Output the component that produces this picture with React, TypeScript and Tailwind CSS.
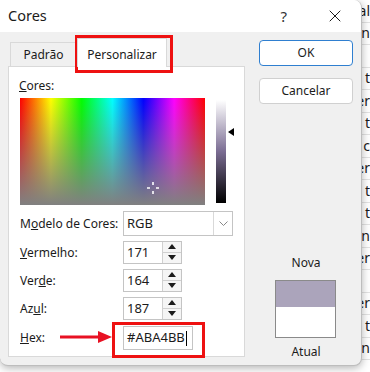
import { X } from "lucide-react";

const bgRows = ["al", "n", "", "t", "er", "t", "c", "er", "t", "t", "n", "er", "", "er", "t", "n"];

function Spin({ value }: { value: string }) {
  return (
    <div className="flex h-[23px] w-[59px] items-center border border-[#c4c4c4] bg-white">
      <span className="w-[38px] pl-[3px] text-[13px] leading-none">{value}</span>
      <div className="flex h-[21px] w-[19px] flex-col border-l border-[#d0d0d0]">
        <div className="flex h-1/2 items-center justify-center border-b border-[#d0d0d0] bg-[#f5f5f5]">
          <svg width="8" height="5" viewBox="0 0 8 5">
            <path d="M0 5 L4 0 L8 5 Z" fill="#1b1b1b" />
          </svg>
        </div>
        <div className="flex h-1/2 items-center justify-center bg-[#f5f5f5]">
          <svg width="8" height="5" viewBox="0 0 8 5">
            <path d="M0 0 L4 5 L8 0 Z" fill="#1b1b1b" />
          </svg>
        </div>
      </div>
    </div>
  );
}

function Row({ label, children, className }: { label: React.ReactNode; children: React.ReactNode; className: string }) {
  return (
    <div className={`flex items-center ${className}`}>
      <span className="ml-[11px] w-[103px] text-[12px]">{label}</span>
      {children}
    </div>
  );
}

export default function App() {
  return (
    <div className="relative h-[372px] w-[370px] overflow-hidden bg-white font-['Noto_Sans',sans-serif] text-[#1b1b1b]">
      {/* sheet behind the dialog */}
      <div className="flex flex-col">
        {bgRows.map((t, i) => (
          <div key={i} className="flex h-[22.5px] items-center justify-end border-b border-[#e3e3e3] text-[14px] leading-none">
            {t}
          </div>
        ))}
      </div>

      {/* dialog */}
      <div className="absolute left-0 top-0 flex h-[366px] w-[362px] flex-col overflow-hidden rounded-b-[8px] rounded-tr-[8px] border-r border-b border-[#bdbdbd] bg-[#f0f0f0] shadow-[0_2px_8px_rgba(0,0,0,0.3)]">
        <div className="flex h-[32px] shrink-0 items-center bg-white pl-[8px]">
          <span className="text-[14.5px]">Cores</span>
          <span className="ml-auto mr-[38px] text-[15px] text-[#333]">?</span>
          <X size={20} strokeWidth={1.2} className="mr-[16px]" />
        </div>

        <div className="flex flex-1">
          {/* left column */}
          <div className="ml-[8px] flex w-[237px] flex-col">
            <div className="flex h-[34px] items-end pl-[2px]">
              <div className="flex h-[24px] w-[67px] items-center justify-center border border-b-0 border-[#d9d9d9] text-[12px]">
                Padrão
              </div>
              <div className="relative z-10 -mb-px flex h-[29px] w-[90px] items-center justify-center border border-b-0 border-[#d9d9d9] bg-white pt-[3px] text-[12px]">
                Personalizar
              </div>
            </div>

            <div className="relative flex h-[291px] flex-col border border-[#d9d9d9] bg-white">
              <span className="ml-[10px] mt-[12px] text-[12px] leading-[14px]">
                <u>C</u>ores:
              </span>

              <div className="mt-[5px] flex items-start">
                <div className="relative ml-[11px] h-[107px] w-[185px] bg-[linear-gradient(to_right,#ff0000,#ffff00,#00ff00,#00ffff,#0000ff,#ff00ff,#ff0000)]">
                  <div className="h-full w-full bg-[linear-gradient(to_bottom,rgba(128,128,128,0),#808080)]" />
                  <svg className="absolute left-[126px] top-[83px]" width="14" height="14" viewBox="0 0 14 14">
                    <path d="M7 1 V4 M7 10 V13 M1 7 H4 M10 7 H13" stroke="#fff" strokeWidth="1.6" />
                  </svg>
                </div>
                <div className="ml-[11px] mt-[2px] h-[103px] w-[10px] bg-[linear-gradient(to_bottom,#ffffff,#7b6d93,#000000)]" />
                <svg className="ml-[2px] mt-[30px]" width="6" height="8" viewBox="0 0 6 8">
                  <path d="M0 4 L6 0 L6 8 Z" fill="#000" />
                </svg>
              </div>

              <Row className="mt-[6px] h-[25px]" label={<>M<u>o</u>delo de Cores:</>}>
                <div className="flex h-[25px] w-[110px] items-center border border-[#c4c4c4] bg-white">
                  <span className="flex-1 pl-[3px] text-[13px]">RGB</span>
                  <div className="flex h-[23px] w-[19px] items-center justify-center border-l border-[#d9d9d9]">
                    <svg width="9" height="5" viewBox="0 0 9 5">
                      <path d="M0.5 0.5 L4.5 4.5 L8.5 0.5" fill="none" stroke="#888" strokeWidth="1" />
                    </svg>
                  </div>
                </div>
              </Row>
              <Row className="mt-[5px] h-[23px]" label={<><u>V</u>ermelho:</>}>
                <Spin value="171" />
              </Row>
              <Row className="mt-[5px] h-[23px]" label={<>Ver<u>d</u>e:</>}>
                <Spin value="164" />
              </Row>
              <Row className="mt-[5px] h-[23px]" label={<>Az<u>u</u>l:</>}>
                <Spin value="187" />
              </Row>
              <Row className="mt-[6px] h-[24px]" label={<><u>H</u>ex:</>}>
                <div className="flex h-[24px] w-[70px] items-center border border-[#c4c4c4] bg-white pl-[3px] text-[13px]">
                  #ABA4BB<span className="ml-px h-[15px] w-px bg-[#000]" />
                </div>
              </Row>

              {/* annotation */}
              <svg className="absolute left-[51px] top-[264px]" width="52" height="12" viewBox="0 0 52 12">
                <path d="M0 6 H40" stroke="#e81123" strokeWidth="3" />
                <path d="M38 0 L52 6 L38 12 Z" fill="#e81123" />
              </svg>
              <div className="absolute left-[103px] top-[255px] h-[36px] w-[93px] border-[3px] border-[#ee1111]" />
            </div>
          </div>

          {/* right column */}
          <div className="ml-[14px] flex w-[94px] flex-col">
            <div className="mt-[8px] flex h-[26px] items-center justify-center rounded-[4px] border border-[#2f7fd0] bg-white text-[12px]">
              OK
            </div>
            <div className="mt-[12px] flex h-[26px] items-center justify-center rounded-[4px] border border-[#d0d0d0] bg-white text-[12px]">
              Cancelar
            </div>
            <span className="mt-[152px] text-center text-[12px] leading-[14px]">Nova</span>
            <div className="ml-[16px] mt-[10px] flex h-[58px] w-[61px] flex-col border border-[#8a8a8a]">
              <div className="h-[26px] bg-[#aba4bb]" />
              <div className="flex-1 bg-white" />
            </div>
            <span className="mt-[7px] text-center text-[12px] leading-[14px]">Atual</span>
          </div>
        </div>
      </div>

      {/* tab highlight */}
      <div className="absolute left-[75px] top-[35px] h-[38px] w-[98px] border-[3px] border-[#ee1111]" />
    </div>
  );
}
